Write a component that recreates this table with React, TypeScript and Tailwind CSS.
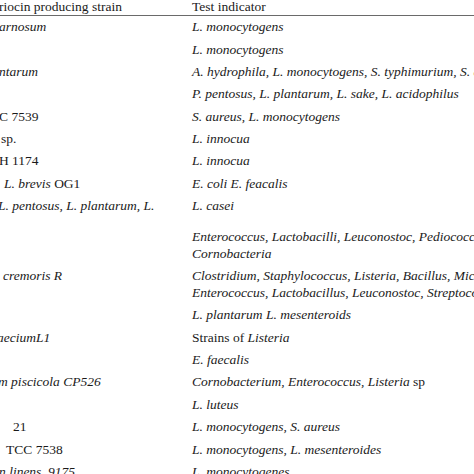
import type { ReactNode } from "react";

interface StrainRow {
  id: string;
  strain: ReactNode;
  strainClass: string;
  indicator: ReactNode;
  rowClass: string;
}

const rows: StrainRow[] = [
  {
    id: "r1",
    strain: <i>arnosum</i>,
    strainClass: "ml-[-1px]",
    indicator: <i>L. monocytogens</i>,
    rowClass: ""
  },
  {
    id: "r2",
    strain: null,
    strainClass: "",
    indicator: <i>L. monocytogens</i>,
    rowClass: ""
  },
  {
    id: "r3",
    strain: <i>ntarum</i>,
    strainClass: "ml-[-1px]",
    indicator: <i>A. hydrophila, L. monocytogens, S. typhimurium, S. aureus</i>,
    rowClass: ""
  },
  {
    id: "r4",
    strain: null,
    strainClass: "",
    indicator: <i>P. pentosus, L. plantarum, L. sake, L. acidophilus</i>,
    rowClass: ""
  },
  {
    id: "r5",
    strain: <span>C 7539</span>,
    strainClass: "ml-[-1px]",
    indicator: <i>S. aureus, L. monocytogens</i>,
    rowClass: ""
  },
  {
    id: "r6",
    strain: <span>sp.</span>,
    strainClass: "ml-[1px]",
    indicator: <i>L. innocua</i>,
    rowClass: ""
  },
  {
    id: "r7",
    strain: <span>H 1174</span>,
    strainClass: "ml-[-1px]",
    indicator: <i>L. innocua</i>,
    rowClass: ""
  },
  {
    id: "r8",
    strain: (
      <>
        <i>L. brevis</i> OG1
      </>
    ),
    strainClass: "ml-[4px]",
    indicator: <i>E. coli E. feacalis</i>,
    rowClass: ""
  },
  {
    id: "r9",
    strain: <i>L. pentosus, L. plantarum, L.</i>,
    strainClass: "ml-[-2px]",
    indicator: <i>L. casei</i>,
    rowClass: ""
  },
  {
    id: "r10",
    strain: null,
    strainClass: "",
    indicator: (
      <>
        <i>Enterococcus, Lactobacilli, Leuconostoc, Pediococcus,</i>
        <br />
        <i>Cornobacteria</i>
      </>
    ),
    rowClass: "mt-[8px]"
  },
  {
    id: "r11",
    strain: <i>cremoris R</i>,
    strainClass: "ml-[3px]",
    indicator: (
      <>
        <i>Clostridium, Staphylococcus, Listeria, Bacillus, Micrococcus,</i>
        <br />
        <i>Enterococcus, Lactobacillus, Leuconostoc, Streptococcus</i>
      </>
    ),
    rowClass: ""
  },
  {
    id: "r12",
    strain: null,
    strainClass: "",
    indicator: <i>L. plantarum L. mesenteroids</i>,
    rowClass: ""
  },
  {
    id: "r13",
    strain: <i>aeciumL1</i>,
    strainClass: "ml-[-3px]",
    indicator: (
      <>
        Strains of <i>Listeria</i>
      </>
    ),
    rowClass: ""
  },
  {
    id: "r14",
    strain: null,
    strainClass: "",
    indicator: <i>E. faecalis</i>,
    rowClass: ""
  },
  {
    id: "r15",
    strain: <i>m piscicola CP526</i>,
    strainClass: "ml-[-2px]",
    indicator: (
      <>
        <i>Cornobacterium, Enterococcus, Listeria</i> sp
      </>
    ),
    rowClass: ""
  },
  {
    id: "r16",
    strain: null,
    strainClass: "",
    indicator: <i>L. luteus</i>,
    rowClass: ""
  },
  {
    id: "r17",
    strain: <span>21</span>,
    strainClass: "ml-[13px]",
    indicator: <i>L. monocytogens, S. aureus</i>,
    rowClass: ""
  },
  {
    id: "r18",
    strain: <span>TCC 7538</span>,
    strainClass: "ml-[6px]",
    indicator: <i>L. monocytogens, L. mesenteroides</i>,
    rowClass: ""
  },
  {
    id: "r19",
    strain: <i>n linens&nbsp;&nbsp;9175</i>,
    strainClass: "ml-[-1px]",
    indicator: <i>L. monocytogenes</i>,
    rowClass: ""
  }
];

export default function App() {
  return (
    <div
      className="h-[474px] w-[474px] overflow-hidden bg-white text-[13.5px] text-[#1a1a1a]"
      style={{ fontFamily: '"Liberation Serif", "Times New Roman", serif' }}
    >
      <div className="flex h-[15.5px] items-start border-b-[1.5px] border-[#6a6a6a] leading-[14px] whitespace-nowrap">
        <div className="w-[192px] shrink-0 overflow-hidden">
          <span className="ml-[-1px] block">riocin producing strain</span>
        </div>
        <div className="flex-1">Test indicator</div>
      </div>

      {rows.map((row) => (
        <div
          key={row.id}
          className={`flex py-[2.7px] leading-[17px] whitespace-nowrap ${row.rowClass}`}
        >
          <div className="w-[192px] shrink-0 overflow-hidden">
            <span className={`block ${row.strainClass}`}>
              {row.strain ?? "\u00a0"}
            </span>
          </div>
          <div className="flex-1">{row.indicator}</div>
        </div>
      ))}
    </div>
  );
}
